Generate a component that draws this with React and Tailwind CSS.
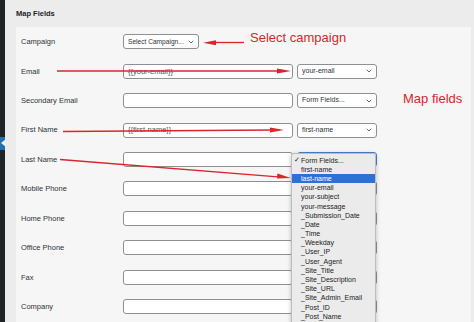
import React from "react";

const Chevron = () => (
  <svg width="6" height="4" viewBox="0 0 6 4" className="shrink-0">
    <polyline points="0.8,0.8 3,3 5.2,0.8" fill="none" stroke="#50575e" strokeWidth="0.9" />
  </svg>
);

const Select = ({ text, w = "w-[80px]", focus = false, small = false }) => (
  <div
    className={`${w} h-[15px] shrink-0 flex items-center justify-between gap-[2px] pl-[4px] pr-[4px] bg-white rounded-[3px] border ${
      focus ? "border-[#4a7fd0]" : "border-[#8c8f94]"
    } ${small ? "text-[6.6px]" : "text-[7px]"} text-[#2c3338]`}
  >
    <span className="whitespace-nowrap overflow-hidden">{text}</span>
    <Chevron />
  </div>
);

const Input = ({ value }) => (
  <div className="w-[170px] h-[15px] shrink-0 flex items-center pl-[4px] bg-white rounded-[3px] border border-[#8c8f94] text-[7.5px] text-[#50575e]">
    {value}
  </div>
);

const rows = [
  { label: "Email", value: "{{your-email}}", sel: "your-email" },
  { label: "Secondary Email", value: "", sel: "Form Fields..." },
  { label: "First Name", value: "{{first-name}}", sel: "first-name" },
  { label: "Last Name", value: "", sel: "", focus: true },
  { label: "Mobile Phone", value: "", sel: "" },
  { label: "Home Phone", value: "", sel: "" },
  { label: "Office Phone", value: "", sel: "" },
  { label: "Fax", value: "", sel: "" },
  { label: "Company", value: "", sel: "" },
];

const options = [
  "Form Fields...",
  "first-name",
  "last-name",
  "your-email",
  "your-subject",
  "your-message",
  "_Submission_Date",
  "_Date",
  "_Time",
  "_Weekday",
  "_User_IP",
  "_User_Agent",
  "_Site_Title",
  "_Site_Description",
  "_Site_URL",
  "_Site_Admin_Email",
  "_Post_ID",
  "_Post_Name",
];

export default function App() {
  return (
    <div className="relative w-[474px] h-[322px] overflow-hidden flex bg-[#ececec] text-[#1d2327] font-['Liberation_Sans',Arial,sans-serif]">
      {/* admin sidebar */}
      <div className="w-[5px] shrink-0 bg-[#1d2327] relative">
        <div className="absolute left-0 top-[137px] w-[5px] h-[13px] bg-[#2271b1]" />
        <div className="absolute left-[1px] top-[139px] w-0 h-0 border-y-[4.5px] border-y-transparent border-r-[5px] border-r-[#f0f0f1]" />
      </div>

      <div className="flex-1 flex flex-col min-w-0">
        <div className="h-[27px] shrink-0 flex items-center pl-[11px] text-[7.5px] font-bold text-[#1d2327]">
          Map Fields
        </div>
        <div className="flex-1 ml-[11px] mr-[3px] bg-[#f6f6f6] flex flex-col">
          <div className="h-[29.44px] shrink-0 flex items-center">
            <div className="w-[107px] pl-[5px] text-[7.5px] text-[#2c3338]">Campaign</div>
            <Select text="Select Campaign..." w="w-[76px]" small />
          </div>
          {rows.map((r) => (
            <div key={r.label} className="h-[29.44px] shrink-0 flex items-center">
              <div className="w-[107px] pl-[5px] text-[7.5px] text-[#2c3338]">{r.label}</div>
              <Input value={r.value} />
              <div className="w-[4px]" />
              <Select text={r.sel} focus={r.focus} />
            </div>
          ))}
        </div>
      </div>

      {/* open dropdown */}
      <div className="absolute left-[291px] top-[153px] w-[85px] h-[180px] bg-[#ebebeb] border border-[#bdbdbd] rounded-[3px] shadow-[0_1px_4px_rgba(0,0,0,0.25)] pt-[1.5px] text-[7px] text-[#222]">
        {options.map((o, i) => (
          <div
            key={o}
            className={`h-[9.2px] flex items-center leading-none ${
              i === 2 ? "bg-[#2f6fd8] text-white" : ""
            }`}
          >
            <span className="w-[9px] pl-[2px] text-[6.5px]">{i === 0 ? "✓" : ""}</span>
            <span>{o}</span>
          </div>
        ))}
      </div>

      {/* annotations */}
      <svg className="absolute inset-0 pointer-events-none" width="474" height="322" viewBox="0 0 474 322">
        <g stroke="#d8262b" strokeWidth="1.3" fill="none">
          <line x1="244" y1="42.5" x2="212" y2="42.5" />
          <line x1="57" y1="71" x2="280" y2="71" />
          <line x1="63" y1="131.5" x2="273" y2="130" />
          <line x1="60" y1="159.5" x2="281" y2="177.2" />
        </g>
        <g fill="#d8262b">
          <polygon points="203,42.8 216,40.3 216,45.3" />
          <polygon points="291,71 277,68.5 277,73.5" />
          <polygon points="284,130 270,127.4 270,132.4" />
          <polygon points="291,178 277.4,173.6 277,178.6" />
        </g>
      </svg>
      <div className="absolute left-[250px] top-[31px] text-[13px] leading-none text-[#d8262b] font-['Liberation_Sans',Arial,sans-serif]">
        Select campaign
      </div>
      <div className="absolute left-[403px] top-[92px] text-[13px] leading-none text-[#d8262b] font-['Liberation_Sans',Arial,sans-serif]">
        Map fields
      </div>
    </div>
  );
}
